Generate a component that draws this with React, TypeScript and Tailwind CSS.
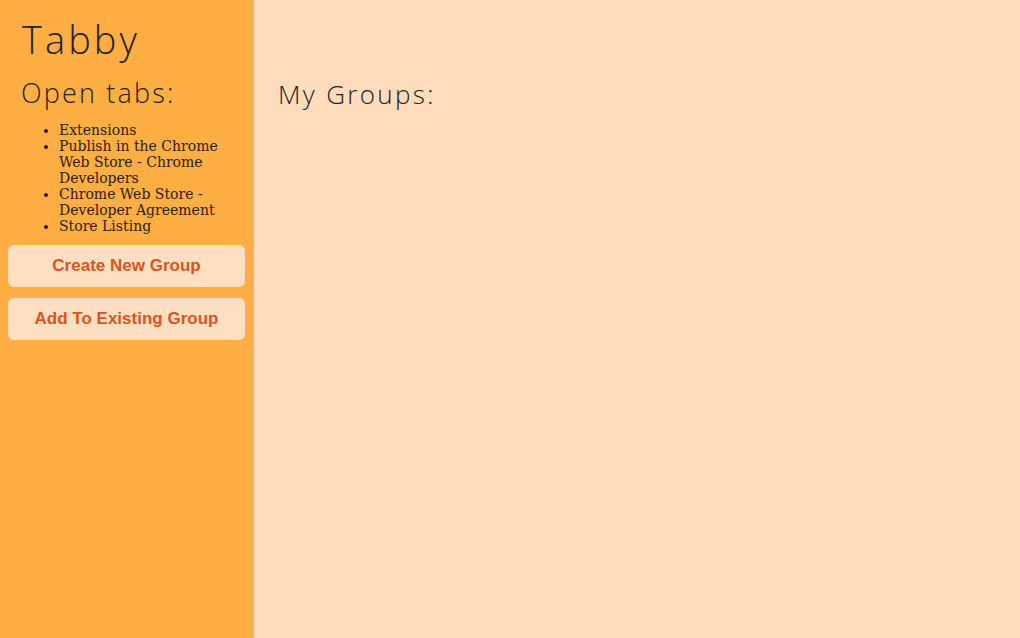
const openTabs = [
  'Extensions',
  'Publish in the Chrome Web Store - Chrome Developers',
  'Chrome Web Store - Developer Agreement',
  'Store Listing',
];

const heading = { fontFamily: '"Open Sans", "Noto Sans", sans-serif' };

export default function App() {
  return (
    <div className="flex h-[638px] w-[1020px] overflow-hidden bg-[#ffdcbc]">
      <aside className="flex w-[254px] shrink-0 flex-col bg-[#ffae44] px-2 pt-[13px]">
        <h1 className="pl-[14px] text-[38px] font-light leading-[52px] tracking-[0.08em] text-[#222]" style={heading}>
          Tabby
        </h1>
        <h2 className="mt-[11px] pl-[13px] text-[27px] font-light leading-[34px] tracking-[0.08em] text-[#222]" style={heading}>
          Open tabs:
        </h2>
        <ul
          className="mt-[12px] list-disc pl-[51px] pr-4 text-[14px] leading-[16px] text-[#2a1d10]"
          style={{ fontFamily: '"DejaVu Serif", "Liberation Serif", serif' }}
        >
          {openTabs.map((tab) => (
            <li key={tab}>{tab}</li>
          ))}
        </ul>
        <div
          className="mt-[11px] flex w-[237px] flex-col gap-[11px]"
          style={{ fontFamily: '"Liberation Sans", Arial, sans-serif' }}
        >
          <button className="h-[42px] rounded-md bg-[#ffdfc2] text-[17px] font-bold text-[#dc5420]">
            Create New Group
          </button>
          <button className="h-[42px] rounded-md bg-[#ffdfc2] text-[17px] font-bold text-[#dc5420]">
            Add To Existing Group
          </button>
        </div>
      </aside>
      <main className="flex-1 pl-[24px] pt-[74px]">
        <h2 className="text-[26px] font-light leading-[40px] tracking-[0.09em] text-[#222]" style={heading}>
          My Groups:
        </h2>
      </main>
    </div>
  );
}
